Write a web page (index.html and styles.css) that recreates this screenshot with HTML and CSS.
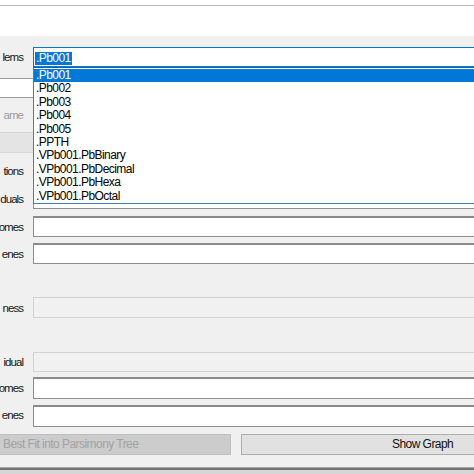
FILE: index.html
```html
<!DOCTYPE html>
<html>
<head>
<meta charset="utf-8">
<link rel="stylesheet" href="styles.css">
</head>
<body>
<div class="window">
  <div class="header"><div class="header-rule"></div></div>
  <div class="form">
    <div class="row row-a">
      <div class="label"><span>lems</span></div>
      <div class="combo-wrap">
        <div class="combo"><span class="combo-sel">.Pb001</span></div>
        <ul class="dropdown">
          <li class="selected">.Pb001</li>
          <li>.Pb002</li>
          <li>.Pb003</li>
          <li>.Pb004</li>
          <li>.Pb005</li>
          <li>.PPTH</li>
          <li>.VPb001.PbBinary</li>
          <li>.VPb001.PbDecimal</li>
          <li>.VPb001.PbHexa</li>
          <li>.VPb001.PbOctal</li>
        </ul>
      </div>
    </div>
    <div class="row-b"><div class="field wide"></div></div>
    <div class="row row-c">
      <div class="label disabled"><span>ame</span></div>
      <div class="field field-disabled"></div>
    </div>
    <div class="row-d"><div class="block"></div></div>
    <div class="row row-e">
      <div class="label"><span>tions</span></div>
      <div class="field"></div>
    </div>
    <div class="row row-f">
      <div class="label"><span>duals</span></div>
      <div class="field"></div>
    </div>
    <div class="row row-g">
      <div class="label"><span>omes</span></div>
      <div class="field"></div>
    </div>
    <div class="row row-h">
      <div class="label"><span>enes</span></div>
      <div class="field"></div>
    </div>
    <div class="row row-i">
      <div class="label"><span>ness</span></div>
      <div class="field field-disabled"></div>
    </div>
    <div class="row row-j">
      <div class="label"><span>idual</span></div>
      <div class="field field-disabled"></div>
    </div>
    <div class="row row-k">
      <div class="label"><span>omes</span></div>
      <div class="field"></div>
    </div>
    <div class="row row-l">
      <div class="label"><span>enes</span></div>
      <div class="field"></div>
    </div>
    <div class="buttons">
      <div class="btn btn-disabled">Best Fit into Parsimony Tree</div>
      <div class="btn btn-show">Show Graph</div>
    </div>
  </div>
  <div class="frame-bottom"></div>
</div>
</body>
</html>
```

FILE: styles.css
```css
html, body {
  margin: 0;
  padding: 0;
}
body {
  width: 474px;
  height: 474px;
  overflow: hidden;
  background: #f0f0f0;
  font-family: "Liberation Sans", Arial, sans-serif;
  font-size: 12px;
  letter-spacing: -0.55px;
  color: #000;
}
.window {
  width: 474px;
  height: 474px;
  display: flex;
  flex-direction: column;
}
.header {
  height: 36px;
  background: #ffffff;
  padding-top: 5px;
  box-sizing: border-box;
  flex-shrink: 0;
}
.header-rule {
  height: 1px;
  background: #bcbcbc;
}
.form {
  display: flex;
  flex-direction: column;
}
.row {
  display: grid;
  grid-template-columns: 24px 1fr;
  column-gap: 9px;
  margin-right: -20px;
}
.label {
  display: flex;
  justify-content: flex-end;
  align-items: center;
  white-space: nowrap;
  color: #161616;
  font-size: 11.5px;
  letter-spacing: -0.95px;
  padding-right: 1px;
}
.label span {
  flex-shrink: 0;
}
.label.disabled {
  color: #9c9c9c;
}
.field {
  background: #ffffff;
  border: 1px solid #8d8d8d;
  border-top: 2px solid #8a8a8a;
  box-sizing: border-box;
}
.field.wide {
  height: 100%;
  margin-left: -2px;
  border-color: #9a9a9a;
  border-top-width: 1px;
}
.field-disabled {
  background: #f1f1f1;
  border: 1px solid #d2d2d2;
}

.row-a { margin-top: 11px; height: 20px; position: relative; z-index: 2; }
.row-b { margin-top: 11px; height: 20px; margin-right: -20px; }
.row-c { margin-top: 7px; height: 20px; }
.row-d { margin-top: 7px; height: 21px; margin-right: -20px; }
.row-e { margin-top: 8px; height: 20px; }
.row-f { margin-top: 8px; height: 20px; }
.row-g { margin-top: 7px; height: 21px; }
.row-h { margin-top: 6px; height: 21px; }
.row-i { margin-top: 33px; height: 21px; }
.row-j { margin-top: 34px; height: 20px; }
.row-k { margin-top: 5px; height: 22px; }
.row-l { margin-top: 6px; height: 22px; }
.row-l .label { padding-bottom: 3px; }

.block {
  height: 100%;
  background: #e4e4e4;
  border-top: 1px solid #cfcfcf;
  border-bottom: 1px solid #d8d8d8;
  box-sizing: border-box;
}

.combo-wrap {
  position: relative;
}
.combo {
  height: 20px;
  box-sizing: border-box;
  background: #ffffff;
  border: 1px solid #0078d7;
  padding: 4px 0 0 1px;
  display: flex;
  align-items: flex-start;
}
.combo-sel {
  background: #0078d7;
  color: #ffffff;
  line-height: 13px;
  padding: 0 1px;
}
.dropdown {
  position: absolute;
  top: 20px;
  left: 0;
  right: 0;
  height: 137px;
  box-sizing: border-box;
  margin: 0;
  padding: 1px 0 0 0;
  list-style: none;
  background: #ffffff;
  border: 1px solid #3f7fbf;
  border-top-color: #1c5f9e;
}
.dropdown li {
  height: 13.4px;
  line-height: 13.4px;
  padding-left: 2px;
  white-space: nowrap;
}
.dropdown li.selected {
  background: #0078d7;
  color: #ffffff;
}

.buttons {
  margin-top: 7px;
  height: 21px;
  display: flex;
  column-gap: 10px;
  margin-right: -20px;
}
.btn {
  box-sizing: border-box;
  height: 21px;
  line-height: 19px;
  white-space: nowrap;
}
.btn-disabled {
  width: 231px;
  background: #cccccc;
  border: 1px solid #bfbfbf;
  border-left: none;
  color: #a2a2a2;
  padding-left: 3px;
}
.btn-show {
  flex: 1;
  background: #e1e1e1;
  border: 1px solid #adadad;
  color: #111;
  padding-left: 150px;
}
.frame-bottom {
  margin-top: 12px;
  height: 7px;
  border-top: 1px solid #a8a8a8;
  background: linear-gradient(#747474 0, #747474 2px, #d6d6d6 2px);
}
```
